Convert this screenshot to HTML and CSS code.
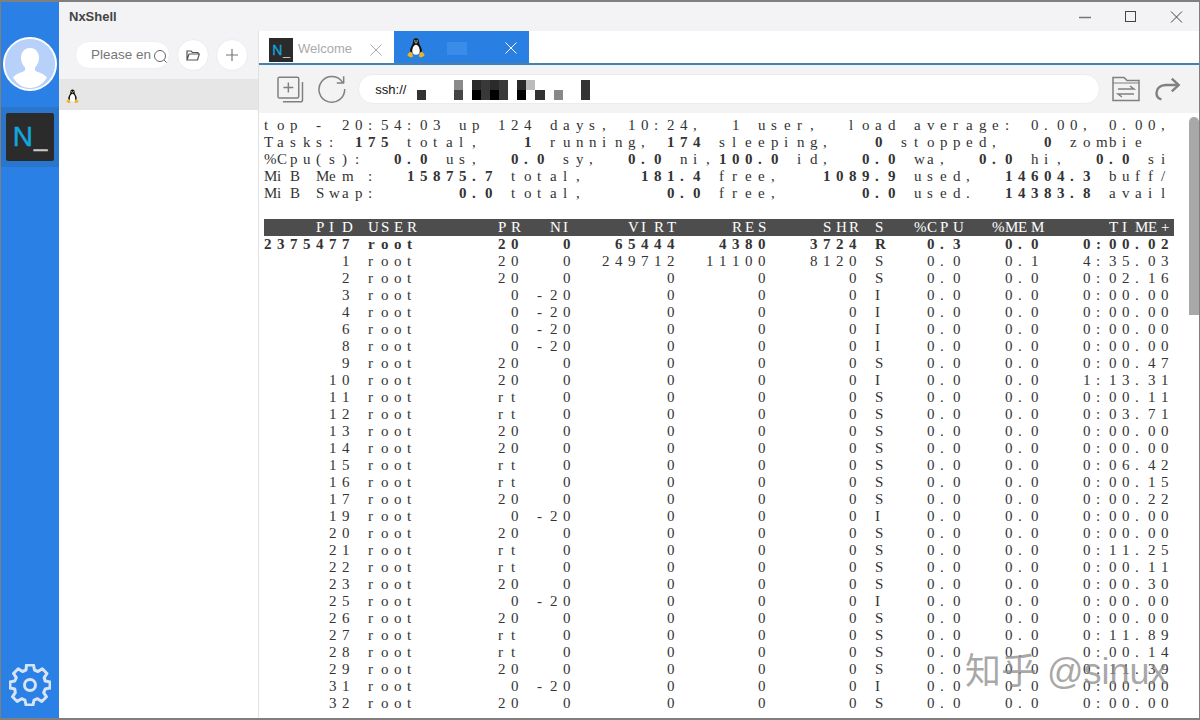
FILE: index.html
```html
<!DOCTYPE html>
<html lang="en">
<head>
<meta charset="utf-8">
<title>NxShell</title>
<link rel="stylesheet" href="styles.css">
</head>
<body>
<svg class="defs" width="0" height="0" aria-hidden="true">
  <symbol id="tux" viewBox="0 0 24 28">
    <path d="M12 1c-3 0-4 2.500-4 5 0 2-.6 3-2 5.500C4.500 14 3.500 17 4.500 20h15c1-3 0-6-1.500-8.500C16.600 9 16 8 16 6c0-2.500-1-5-4-5z" fill="#111"/>
    <path d="M12 9.500c-2.800 0-5 4-5 8.500 0 3 2 5 5 5s5-2 5-5c0-4.500-2.200-8.500-5-8.500z" fill="#fff"/>
    <path d="M10 6.500l2-.6 2 .6-2 1.800z" fill="#eeb422"/>
    <circle cx="10.500" cy="4.500" r=".9" fill="#fff"/><circle cx="13.500" cy="4.500" r=".9" fill="#fff"/>
    <path d="M5 19c-2 .5-4 3-4.500 4.500C2 25.500 6 27 7.500 26c1-1 .5-5-2.500-7zM19 19c2 .5 4 3 4.500 4.500-1.500 2-5.500 3.500-7 2.500-1-1-.5-5 2.500-7z" fill="#eeb422"/>
  </symbol>
</svg>
<div class="window">
  <aside class="rail">
    <div class="avatar">
      <svg viewBox="0 0 50 50" width="50" height="50"><circle cx="25" cy="25" r="25" fill="#b7d1fb"/><path d="M25 9c-6 0-9 4.500-9 10 0 4 2 7.500 4 9.500v3c-3 2-9 3-12 7 4 6.500 10 10.500 17 10.500s13-4 17-10.500c-3-4-9-5-12-7v-3c2-2 4-5.500 4-9.500 0-5.500-3-10-9-10z" fill="#fff"/></svg>
    </div>
    <div class="rail-active">
      <div class="logo logo-big"><span class="logo-n">N</span><span class="logo-u">_</span></div>
    </div>
    <div class="rail-spacer"></div>
    <svg class="gear" viewBox="0 0 42 42" width="42" height="42" fill="none" stroke="#d6e4f6" stroke-width="3" stroke-linejoin="round"><path d="M17.500 3h7l1 5 3.500 1.500 4.300-2.800 4.700 4.800-2.800 4.200L36.200 19l4.800 1v6l-4.800 1-1.500 3.600 2.800 4.200-4.700 4.700-4.300-2.800-3.500 1.500-1 4.800h-7l-1-4.800-3.500-1.500-4.300 2.800-4.700-4.700 2.800-4.200L5.800 27 1 26v-6l4.800-1 1.500-3.300-2.800-4.200 4.700-4.800 4.300 2.800L17 8z" transform="translate(0 -2)"/><circle cx="21" cy="21" r="5.500"/></svg>
  </aside>
  <div class="main">
    <header class="titlebar">
      <span class="app-name">NxShell</span>
      <div class="win-controls">
        <svg width="14" height="14" viewBox="0 0 14 14" stroke="#777" fill="none"><path d="M1 7.500h12" stroke-width="1.500"/></svg>
        <svg width="14" height="14" viewBox="0 0 14 14" stroke="#444" fill="none"><rect x="1.500" y="1.500" width="10" height="10"/></svg>
        <svg width="14" height="14" viewBox="0 0 14 14" stroke="#444" fill="none"><path d="M1 1.500l11 11M12 1.500l-11 11"/></svg>
      </div>
    </header>
    <div class="body">
      <section class="panel">
        <div class="panel-top">
          <div class="search">
            <span class="search-text">Please en</span>
            <svg class="search-icon" width="16" height="16" viewBox="0 0 16 16" fill="none" stroke="#666"><circle cx="7" cy="7" r="5.500"/><path d="M11 11l4 4"/></svg>
          </div>
          <button class="round"><svg width="14" height="13" viewBox="0 0 14 13" fill="none" stroke="#555" stroke-width="1.200"><path d="M1 11V2h4l1.500 1.500H12V5M1 11l2-6h10.300L11.500 11z"/></svg></button>
          <button class="round"><svg width="14" height="14" viewBox="0 0 14 14" stroke="#777" stroke-width="1.200"><path d="M7 1v12M1 7h12"/></svg></button>
        </div>
        <div class="session"><svg width="13" height="15"><use href="#tux"/></svg></div>
      </section>
      <section class="work">
        <nav class="tabs">
          <div class="tab tab-off">
            <div class="logo logo-small"><span class="logo-n">N</span><span class="logo-u">_</span></div>
            <span class="tab-label">Welcome</span>
            <svg class="tab-x" width="12" height="12" viewBox="0 0 12 12" stroke="#aaa"><path d="M.5.500l11 11M11.500.500l-11 11"/></svg>
          </div>
          <div class="tab tab-on">
            <svg width="18" height="22"><use href="#tux"/></svg>
            <span class="tab-blur"></span>
            <svg class="tab-x" width="12" height="12" viewBox="0 0 12 12" stroke="#fff"><path d="M.5.500l11 11M11.500.500l-11 11"/></svg>
          </div>
        </nav>
        <div class="toolbar">
          <svg width="27" height="27" viewBox="0 0 27 27" fill="none" stroke="#808080" stroke-width="1.500"><rect x="1" y="1" width="21" height="21" rx="1.500"/><path d="M11.500 6.500v10M6.500 11.500h10" /><path d="M25.800 6v18.500a1.500 1.500 0 0 1-1.500 1.500H6" /></svg>
          <svg class="refresh" width="30" height="30" viewBox="0 0 30 30" fill="none" stroke="#808080" stroke-width="1.500"><path d="M26 8.500A13 13 0 1 0 28 15"/><path d="M27 2v7h-7" stroke-linejoin="round"/></svg>
          <div class="url">
            <span class="url-text">ssh://</span>
            <svg class="mosaic" width="176" height="20" viewBox="0 0 176 20" shape-rendering="crispEdges">
              <rect x="0" y="10" width="9" height="10" fill="#333"/>
              <rect x="37" y="0" width="9" height="10" fill="#8a8a8a"/><rect x="37" y="10" width="9" height="10" fill="#444"/>
              <rect x="55" y="0" width="9" height="10" fill="#2a2a2a"/><rect x="55" y="10" width="9" height="10" fill="#000"/>
              <rect x="64" y="0" width="9" height="20" fill="#383838"/>
              <rect x="73" y="0" width="9" height="10" fill="#2a2a2a"/><rect x="73" y="10" width="9" height="10" fill="#000"/>
              <rect x="82" y="0" width="9" height="20" fill="#3a3a3a"/>
              <rect x="100" y="0" width="9" height="10" fill="#2a2a2a"/><rect x="100" y="10" width="9" height="10" fill="#000"/>
              <rect x="109" y="0" width="9" height="10" fill="#bbb"/>
              <rect x="118" y="10" width="10" height="10" fill="#333"/>
              <rect x="137" y="10" width="9" height="10" fill="#888"/>
              <rect x="164" y="0" width="9" height="20" fill="#333"/>
            </svg>
          </div>
          <svg class="tool-gap" width="28" height="26" viewBox="0 0 28 26" fill="none" stroke="#808080" stroke-width="1.500"><path d="M1 24.500V1.500h11l3 3h12v20z"/><path d="M1 7h26" stroke-width="1"/><path d="M6 13h16l-4-3M22 18H6l4 3"/></svg>
          <svg width="26" height="24" viewBox="0 0 26 24" fill="none" stroke="#808080" stroke-width="2.400"><path d="M24 8H11C5 8 1.500 11.500 1.500 16c0 3 1.500 5.500 5 6.500"/><path d="M17 1.500L24 8l-7 6.500"/></svg>
        </div>
        <div class="terminal">
          <div class="screen">
<div class="row">top - 20:54:03 up 124 days, 10:24,  1 user,  load average: 0.00, 0.00,</div>
<div class="row">Tasks: <b>175</b> total,   <b>1</b> running, <b>174</b> sleeping,   <b>0</b> stopped,   <b>0</b> zombie</div>
<div class="row">%Cpu(s):  <b>0.0</b> us,  <b>0.0</b> sy,  <b>0.0</b> ni,<b>100.0</b> id,  <b>0.0</b> wa,  <b>0.0</b> hi,  <b>0.0</b> si</div>
<div class="row">MiB Mem :  <b>15875.7</b> total,    <b>181.4</b> free,   <b>1089.9</b> used,  <b>14604.3</b> buff/</div>
<div class="row">MiB Swap:      <b>0.0</b> total,      <b>0.0</b> free,      <b>0.0</b> used.  <b>14383.8</b> avail</div>
<div class="row"> </div>
<div class="row row-head">    PID USER      PR  NI    VIRT    RES    SHR S  %CPU  %MEM     TIME+</div>
<div class="row"><b>2375477 root      20   0   65444   4380   3724 R   0.3   0.0   0:00.02</b></div>
<div class="row">      1 root      20   0  249712  11100   8120 S   0.0   0.1   4:35.03</div>
<div class="row">      2 root      20   0       0      0      0 S   0.0   0.0   0:02.16</div>
<div class="row">      3 root       0 -20       0      0      0 I   0.0   0.0   0:00.00</div>
<div class="row">      4 root       0 -20       0      0      0 I   0.0   0.0   0:00.00</div>
<div class="row">      6 root       0 -20       0      0      0 I   0.0   0.0   0:00.00</div>
<div class="row">      8 root       0 -20       0      0      0 I   0.0   0.0   0:00.00</div>
<div class="row">      9 root      20   0       0      0      0 S   0.0   0.0   0:00.47</div>
<div class="row">     10 root      20   0       0      0      0 I   0.0   0.0   1:13.31</div>
<div class="row">     11 root      rt   0       0      0      0 S   0.0   0.0   0:00.11</div>
<div class="row">     12 root      rt   0       0      0      0 S   0.0   0.0   0:03.71</div>
<div class="row">     13 root      20   0       0      0      0 S   0.0   0.0   0:00.00</div>
<div class="row">     14 root      20   0       0      0      0 S   0.0   0.0   0:00.00</div>
<div class="row">     15 root      rt   0       0      0      0 S   0.0   0.0   0:06.42</div>
<div class="row">     16 root      rt   0       0      0      0 S   0.0   0.0   0:00.15</div>
<div class="row">     17 root      20   0       0      0      0 S   0.0   0.0   0:00.22</div>
<div class="row">     19 root       0 -20       0      0      0 I   0.0   0.0   0:00.00</div>
<div class="row">     20 root      20   0       0      0      0 S   0.0   0.0   0:00.00</div>
<div class="row">     21 root      rt   0       0      0      0 S   0.0   0.0   0:11.25</div>
<div class="row">     22 root      rt   0       0      0      0 S   0.0   0.0   0:00.11</div>
<div class="row">     23 root      20   0       0      0      0 S   0.0   0.0   0:00.30</div>
<div class="row">     25 root       0 -20       0      0      0 I   0.0   0.0   0:00.00</div>
<div class="row">     26 root      20   0       0      0      0 S   0.0   0.0   0:00.00</div>
<div class="row">     27 root      rt   0       0      0      0 S   0.0   0.0   0:11.89</div>
<div class="row">     28 root      rt   0       0      0      0 S   0.0   0.0   0:00.14</div>
<div class="row">     29 root      20   0       0      0      0 S   0.0   0.0   0:11.39</div>
<div class="row">     31 root       0 -20       0      0      0 I   0.0   0.0   0:00.00</div>
<div class="row">     32 root      20   0       0      0      0 S   0.0   0.0   0:00.00</div>
          </div>
          <div class="scrollbar"><div class="thumb"></div></div>
          <div class="watermark">知乎 @sinux</div>
        </div>
      </section>
    </div>
  </div>
</div>
<script src="cells.js"></script>
</body>
</html>
```
FILE: styles.css
```css
* { box-sizing: border-box; }
html, body { margin: 0; height: 100%; overflow: hidden; }
body { font-family: "Liberation Sans", Arial, sans-serif; background: #fff; }
.defs { position: absolute; }
.window { display: flex; width: 1200px; height: 720px; border: 1px solid #7f7f7f; border-top-width: 2px; border-bottom-width: 2px; }

.rail { width: 58px; flex: none; background: #2a80e4; display: flex; flex-direction: column; align-items: center; padding-top: 35px; }
.avatar { width: 54px; height: 54px; border-radius: 50%; background: #b7d1fb; border: 2px solid #fff; overflow: hidden; flex: none; }
.avatar svg { display: block; }
.rail-active { width: 100%; height: 60px; margin-top: 16px; background: #2a76cc; display: flex; align-items: center; justify-content: center; flex: none; }
.rail-spacer { flex: 1; }
.gear { margin-bottom: 12px; flex: none; }

.logo { background: #2b2b2b; display: flex; align-items: baseline; justify-content: center; font-family: "Liberation Sans", sans-serif; flex: none; }
.logo-big { width: 48px; height: 48px; border-radius: 2px; font-size: 28px; line-height: 48px; -webkit-text-stroke: .5px; }
.logo-small { width: 24px; height: 24px; font-size: 14px; line-height: 24px; -webkit-text-stroke: .3px; }
.logo-n { color: #12a5de; }
.logo-u { color: #c8c8c8; font-size: .85em; margin-left: 1px; }

.main { flex: 1; min-width: 0; display: flex; flex-direction: column; }
.titlebar { height: 29px; flex: none; background: #f3f3f5; display: flex; align-items: center; justify-content: space-between; padding: 0 15px 0 10px; }
.app-name { font-size: 13px; font-weight: 700; color: #444; }
.win-controls { display: flex; gap: 32px; align-items: center; }

.body { flex: 1; min-height: 0; display: flex; }
.panel { width: 200px; flex: none; border-right: 1px solid #e2e2e2; background: #fff; }
.panel-top { height: 48px; background: #f3f3f5; display: flex; align-items: center; gap: 7px; padding: 0 0 0 16px; }
.search { width: 95px; height: 28px; border-radius: 14px; background: #fff; border: 1px solid #efefef; display: flex; align-items: center; padding-left: 15px; gap: 2px; overflow: hidden; flex: none; }
.search-text { font-size: 13.500px; color: #777; white-space: nowrap; margin-top: -2px; }
.search-icon { margin-top: 3px; flex: none; }
.round { width: 32px; height: 32px; border-radius: 50%; border: 1px solid #ececec; background: #fff; padding: 0; display: flex; align-items: center; justify-content: center; flex: none; }
.session { height: 31px; background: #e6e6e6; display: flex; align-items: center; padding: 3px 0 0 7px; }

.work { flex: 1; min-width: 0; display: flex; flex-direction: column; }
.tabs { height: 34px; flex: none; display: flex; background: #fff; border-bottom: 2px solid #4a80a6; }
.tab { height: 32px; display: flex; align-items: center; }
.tab-off { width: 135px; padding: 5px 0 0 10px; }
.tab-label { font-size: 13px; color: #aaa; margin-left: 5px; margin-top: -3px; }
.tab-off .tab-x { margin-left: 18px; }
.tab-on { width: 135px; background: #2a7fe2; padding: 2px 0 0 13px; }
.tab-blur { width: 20px; height: 13px; margin-left: 22px; background: #3a8ce8; }
.tab-on .tab-x { margin-left: 38px; }

.toolbar { height: 48px; flex: none; background: #f3f3f3; border-top: 2px solid #e8f5fd; display: flex; align-items: center; padding: 0 18px 2px; }
.refresh { margin-left: 13px; }
.url { width: 742px; height: 30px; border-radius: 15px; background: #fff; border: 1px solid #ececec; margin-left: 12px; display: flex; align-items: center; padding-left: 16px; flex: none; }
.url-text { font-size: 13px; color: #111; width: 42px; flex: none; }
.mosaic { flex: none; margin-top: 2px; }
.tool-gap { margin: 0 15px 0 12px; flex: none; }

.terminal { flex: 1; min-height: 0; display: flex; background: #fff; position: relative; overflow: hidden; padding: 4px 0 0 5px; }
.screen { width: 910px; flex: none; font-family: "Liberation Serif", "Times New Roman", serif; font-size: 15px; color: #333; }
.row { height: 17px; line-height: 17px; white-space: pre; }
.c { display: inline-block; width: 13px; white-space: pre; }
.row-head { background: #4d4d4d; color: #fff; }
.scrollbar { position: absolute; top: 4px; right: 0; width: 10px; bottom: 0; }
.thumb { height: 198px; width: 10px; border-radius: 5px 5px 0 0; background: #a8a8a8; }
.watermark { position: absolute; left: 706px; top: 539px; font-family: "Liberation Sans", "Noto Sans CJK SC", sans-serif; font-size: 36px; line-height: 40px; color: rgba(140,140,140,.75); white-space: nowrap; }
```
FILE: cells.js
```js
// The terminal draws every character in a fixed cell, even with a proportional font.
document.querySelectorAll('.row').forEach(function (row) {
  var walk = document.createTreeWalker(row, NodeFilter.SHOW_TEXT);
  var nodes = [];
  while (walk.nextNode()) nodes.push(walk.currentNode);
  nodes.forEach(function (node) {
    var frag = document.createDocumentFragment();
    Array.from(node.data).forEach(function (ch) {
      var cell = document.createElement('span');
      cell.className = 'c';
      cell.textContent = ch;
      frag.appendChild(cell);
    });
    node.parentNode.replaceChild(frag, node);
  });
});
```
